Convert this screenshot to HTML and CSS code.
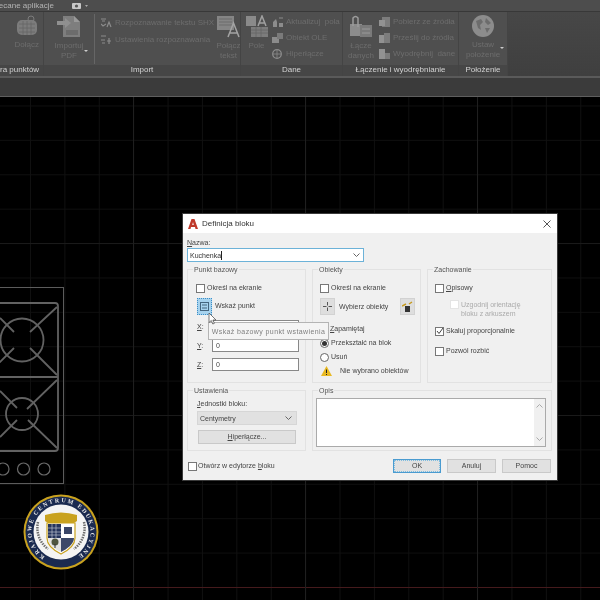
FILE: index.html
```html
<!DOCTYPE html>
<html lang="pl">
<head>
<meta charset="utf-8">
<title>Definicja bloku</title>
<link rel="stylesheet" href="styles.css">
</head>
<body>
<div class="app">
  <header class="top">
    <div class="tabs">
      <span class="tab-text">lecane aplikacje</span>
      <svg class="cam" width="20" height="8" viewBox="0 0 20 8"><rect x="0" y="1" width="9" height="6" rx="1" fill="#c8c8c8"/><circle cx="4.500" cy="4" r="1.600" fill="#555"/><path d="M13 3h3l-1.500 2z" fill="#aaa"/></svg>
    </div>
    <div class="ribbon">
      <section class="panel p1">
        <div class="pbody end">
          <div class="big"><svg width="22" height="22" viewBox="0 0 22 22"><rect x="1" y="5" width="20" height="15" rx="5" fill="#7c7c7c"/><path d="M3 9h16M3 13h16M3 17h16M7 6v14M11 6v14M15 6v14" stroke="#666" stroke-width=".8"/><circle cx="15" cy="4" r="3" fill="none" stroke="#7c7c7c"/></svg><span>Dołącz</span></div>
        </div>
        <div class="ptitle left">ra punktów</div>
      </section>
      <section class="panel p2">
        <div class="pbody">
          <div class="big w-import"><svg width="24" height="23" viewBox="0 0 24 23"><path d="M6 1h11l6 6v15H6z" fill="#7e7e7e"/><path d="M0 6h8V3l6 5-6 5v-3H0z" fill="#909090"/><path d="M17 1v6h6" fill="#999"/><rect x="9" y="15" width="12" height="5" fill="#6c6c6c"/></svg><span>Importuj<br>PDF</span></div>
          <i class="caret c-pdf"></i>
          <div class="vsep"></div>
          <div class="rows w-rec">
            <div class="row"><svg width="11" height="10" viewBox="0 0 11 10"><path d="M0 1h5M1 3h3M6 9l2-5 2 5M0 6l2 2 3-2" fill="none" stroke="#8c8c8c" stroke-width="1.200"/></svg><span>Rozpoznawanie tekstu SHX</span></div>
            <div class="row"><svg width="11" height="10" viewBox="0 0 11 10"><path d="M0 1h5M0 5h4M6 6h4M8 3v6M1 8h3" fill="none" stroke="#8c8c8c" stroke-width="1.200"/></svg><span>Ustawienia rozpoznawania</span></div>
          </div>
          <div class="big w-join"><svg width="23" height="23" viewBox="0 0 23 23"><rect x="0" y="1" width="17" height="14" fill="#858585"/><path d="M2 4h13M2 7h13M2 10h13" stroke="#666" stroke-width=".8"/><path d="M11 22l5.500-14 5.500 14M13 18h7" fill="none" stroke="#a4a4a4" stroke-width="1.500"/></svg><span>Połącz<br>tekst</span></div>
        </div>
        <div class="ptitle">Import</div>
      </section>
      <section class="panel p3">
        <div class="pbody">
          <div class="big w-pole"><svg width="22" height="23" viewBox="0 0 22 23"><rect x="0" y="1" width="10" height="10" fill="#8a8a8a"/><path d="M12 11l4-10 4 10M13.500 8h5" fill="none" stroke="#a0a0a0" stroke-width="1.500"/><rect x="5" y="12" width="17" height="10" fill="#7c7c7c"/><path d="M5 15h17M5 18h17M10 12v10M15 12v10" stroke="#666" stroke-width=".8"/></svg><span>Pole</span></div>
          <div class="rows w-dane">
            <div class="row"><svg width="11" height="10" viewBox="0 0 11 10"><path d="M1 10V5l3-3 1 3v5zM7 6h4v4H7z" fill="#8c8c8c"/><path d="M7 1h4" stroke="#8c8c8c"/></svg><span>Aktualizuj&nbsp; pola</span></div>
            <div class="row"><svg width="11" height="10" viewBox="0 0 11 10"><rect x="0" y="4" width="7" height="6" fill="#8c8c8c"/><rect x="5" y="0" width="6" height="6" fill="#7a7a7a"/></svg><span>Obiekt OLE</span></div>
            <div class="row"><svg width="11" height="10" viewBox="0 0 11 10"><circle cx="5" cy="5" r="4.300" fill="none" stroke="#8c8c8c" stroke-width="1.300"/><path d="M1 5h8M5 1v8" stroke="#8c8c8c" stroke-width=".8"/></svg><span>Hiperłącze</span></div>
          </div>
        </div>
        <div class="ptitle">Dane</div>
      </section>
      <section class="panel p4">
        <div class="pbody">
          <div class="big w-lacze"><svg width="22" height="23" viewBox="0 0 22 23"><rect x="0" y="9" width="12" height="12" fill="#8c8c8c"/><path d="M3 11V3q2.500-3 5 0v9" fill="none" stroke="#9c9c9c" stroke-width="1.500"/><rect x="10" y="10" width="12" height="12" fill="#7a7a7a"/><path d="M12 14h8M12 18h8" stroke="#999"/></svg><span>Łącze<br>danych</span></div>
          <div class="rows w-zrodlo">
            <div class="row"><svg width="11" height="10" viewBox="0 0 11 10"><rect x="3" y="0" width="8" height="10" fill="#7c7c7c"/><rect x="0" y="3" width="6" height="6" fill="#929292"/></svg><span>Pobierz ze źródła</span></div>
            <div class="row"><svg width="11" height="10" viewBox="0 0 11 10"><rect x="0" y="2" width="5" height="8" fill="#929292"/><rect x="5" y="0" width="6" height="10" fill="#7c7c7c"/></svg><span>Prześlij do źródła</span></div>
            <div class="row"><svg width="11" height="10" viewBox="0 0 11 10"><rect x="0" y="0" width="6" height="10" fill="#929292"/><rect x="6" y="4" width="5" height="6" fill="#7c7c7c"/></svg><span>Wyodrębnij&nbsp; dane</span></div>
          </div>
        </div>
        <div class="ptitle">Łączenie i wyodrębnianie</div>
      </section>
      <section class="panel p5">
        <div class="pbody center">
          <div class="big"><svg width="22" height="22" viewBox="0 0 22 22"><circle cx="11" cy="11" r="11" fill="#8c8c8c"/><path d="M4 6l5-2 2 3-3 3 1 5-3-2zM14 3l5 5-3 2-3-3zM13 13l5 0-3 5z" fill="#6c6c6c"/></svg><span>Ustaw<br>położenie</span></div>
          <i class="caret"></i>
        </div>
        <div class="ptitle">Położenie</div>
      </section>
      <div class="ribbon-rest"></div>
    </div>
    <div class="subbar"></div>
  </header>

  <main class="canvas">
    <svg class="stove" width="70" height="200" viewBox="0 287 70 200">
      <rect x="-30" y="287.500" width="93.500" height="196" fill="none" stroke="#5c5c5c" stroke-width="1"/>
      <g fill="none" stroke="#626262" stroke-width="1.800">
        <rect x="-30" y="303" width="88" height="148" rx="3"/>
        <path d="M-30 377H58"/>
        <circle cx="22" cy="340" r="21.500"/>
        <circle cx="22" cy="414" r="16"/>
        <path d="M57 307L30 332M30 348L57 375M14 332L0 318M14 348L-2 364M57 380L27 409M28 420L57 448M17 408L0 391M17 420L0 437"/>
      </g>
      <g fill="none" stroke="#6a6a6a" stroke-width="1.200">
        <circle cx="3" cy="469" r="6"/>
        <circle cx="23.500" cy="469" r="6"/>
        <circle cx="44" cy="469" r="6"/>
      </g>
    </svg>

    <svg class="logo" width="76" height="76" viewBox="0 0 76 76">
      <circle cx="38" cy="38" r="37.500" fill="#c9a21f"/>
      <circle cx="38" cy="38" r="35.500" fill="#1a2a50"/>
      <circle cx="38" cy="38" r="27.500" fill="#f4f4f4"/>
      <path id="arc" d="M28 65.500A29.500 29.500 0 1 1 48 65.500" fill="none"/>
      <text class="logo-text"><textPath href="#arc" startOffset="50%" text-anchor="middle">KRAJOWE CENTRUM EDUKACYJNE</textPath></text>
      <path d="M15 28c-2 10 1 20 10 27M61 28c2 10-1 20-10 27" fill="none" stroke="#6d6d6d" stroke-width="2.500" stroke-dasharray="1.500 1"/>
      <path d="M22 21q16-5 32 0v6l-3 2H25l-3-2z" fill="#c9a21f"/>
      <path d="M24 29h28v15c0 8-8 13-14 16-6-3-14-8-14-16z" fill="#fff" stroke="#c9a21f" stroke-width="1.200"/>
      <path d="M25 30h13v14H25z" fill="#25345c"/>
      <path d="M25 34h13M25 38h13M25 41h13M29 30v14M33 30v14" stroke="#cfd3dc" stroke-width=".6"/>
      <path d="M38 44h13c0 6-7 11-13 14z" fill="#3c4868"/>
      <path d="M25 44h13v14c-5-2-13-7-13-14z" fill="#e2e2e2"/>
      <rect x="41" y="33" width="8" height="7" fill="#3a4668"/>
      <circle cx="32" cy="48" r="3.500" fill="#4f5540"/>
      <rect x="31.500" y="50" width="1" height="4" fill="#333"/>
    </svg>

    <div class="dialog">
      <div class="titlebar">
        <svg class="acad" width="10" height="10" viewBox="0 0 10 10"><path d="M3.500 0h3L10 10H7.500L7 8H3l-.5 2H0z" fill="#c0392b"/><path d="M4 6h2L5 3z" fill="#f4d0cc"/></svg>
        <span class="dtitle">Definicja bloku</span>
        <svg class="close" width="8" height="8" viewBox="0 0 8 8"><path d="M.5.5l7 7M7.500.5l-7 7" stroke="#555" stroke-width="1"/></svg>
      </div>
      <div class="dbody">
        <label class="lbl-name"><u>N</u>azwa:</label>
        <div class="name-input"><span class="name-text">Kuchenka</span><i class="text-cursor"></i><svg class="chev" width="7" height="4" viewBox="0 0 7 4"><path d="M.5.500l3 3 3-3" fill="none" stroke="#666"/></svg></div>

        <div class="groups">
          <div class="group g-base">
            <span class="legend">Punkt bazowy</span>
            <div class="chk-row"><i class="chk"></i><span>Określ na ekranie</span></div>
            <div class="pick-row">
              <div class="pick"><svg width="9" height="9" viewBox="0 0 9 9"><rect x=".5" y=".5" width="8" height="8" fill="none" stroke="#45667f"/><path d="M2 3h5M2 6h5" stroke="#45667f"/></svg></div>
              <span>Wskaż punkt</span>
            </div>
            <div class="coord c-x"><span class="clabel"><u>X</u>:</span><div class="field"></div></div>
            <div class="coord"><span class="clabel"><u>Y</u>:</span><div class="field">0</div></div>
            <div class="coord"><span class="clabel"><u>Z</u>:</span><div class="field">0</div></div>
          </div>

          <div class="group g-obj">
            <span class="legend">Obiekty</span>
            <div class="chk-row"><i class="chk"></i><span>Określ na ekranie</span></div>
            <div class="obj-row">
              <div class="sq"><svg width="9" height="9" viewBox="0 0 9 9"><path d="M4.500 0v3.500M4.500 5.500V9M0 4.500h3.500M5.500 4.500H9" stroke="#555"/></svg></div>
              <span class="obj-text">Wybierz obiekty</span>
              <div class="sq sq2"><svg width="11" height="11" viewBox="0 0 11 11"><rect x="3" y="5" width="5" height="6" fill="#333"/><path d="M0 5l4-2M7 3l3-2" stroke="#c79a1d" stroke-width="1.500"/></svg></div>
            </div>
            <div class="remember"><u>Z</u>apamiętaj</div>
            <div class="radio-row"><i class="radio on"></i><span>Przekształć na blok</span></div>
            <div class="radio-row r2"><i class="radio"></i><span>Usuń</span></div>
            <div class="warn-row">
              <svg width="11" height="10" viewBox="0 0 11 10"><path d="M5.500 0L11 10H0z" fill="#e8b923"/><path d="M5.500 3.500v3.500M5.500 8v1" stroke="#222"/></svg>
              <span>Nie wybrano obiektów</span>
            </div>
          </div>

          <div class="group g-beh">
            <span class="legend">Zachowanie</span>
            <div class="chk-row"><i class="chk"></i><span><u>O</u>pisowy</span></div>
            <div class="chk-row sub"><i class="chk dis"></i><span>Uzgodnij orientację<br>bloku z arkuszem</span></div>
            <div class="chk-row scale"><i class="chk"><svg width="8" height="8" viewBox="0 0 8 8"><path d="M1 4l2 2.500L7 1" fill="none" stroke="#444"/></svg></i><span>Skaluj proporcjonalnie</span></div>
            <div class="chk-row allow"><i class="chk"></i><span>Pozwól rozbić</span></div>
          </div>

          <div class="group g-set">
            <span class="legend">Ustawienia</span>
            <div class="unit-label"><u>J</u>ednostki bloku:</div>
            <div class="select"><span>Centymetry</span><svg width="7" height="4" viewBox="0 0 7 4"><path d="M.5.500l3 3 3-3" fill="none" stroke="#666"/></svg></div>
            <div class="btn hyper"><span><u>H</u>iperłącze...</span></div>
          </div>

          <div class="group g-desc">
            <span class="legend">Opis</span>
            <div class="textarea">
              <div class="scroll">
                <svg width="7" height="4" viewBox="0 0 7 4"><path d="M.5 3.500l3-3 3 3" fill="none" stroke="#aaa"/></svg>
                <svg width="7" height="4" viewBox="0 0 7 4"><path d="M.5.500l3 3 3-3" fill="none" stroke="#aaa"/></svg>
              </div>
            </div>
          </div>
        </div>

        <div class="footer">
          <div class="chk-row open"><i class="chk"></i><span>Otwórz w edytorze <u>b</u>loku</span></div>
          <div class="buttons">
            <div class="btn ok">OK</div>
            <div class="btn">Anuluj</div>
            <div class="btn">Pomoc</div>
          </div>
        </div>
      </div>

      <div class="tooltip">Wskaż bazowy punkt wstawienia</div>
      <svg class="pointer" width="9" height="13" viewBox="0 0 9 13"><path d="M1 1v9.500l2.300-2 1.500 3.500 1.600-.7-1.500-3.300H8z" fill="#fff" stroke="#555" stroke-width=".8"/></svg>
    </div>
  </main>
</div>
</body>
</html>
```

FILE: styles.css
```css
* { box-sizing: border-box; }
html, body { margin: 0; padding: 0; background: #000; }
body { width: 600px; height: 600px; overflow: hidden; font-family: "Liberation Sans", Arial, sans-serif; }
.app { width: 600px; height: 600px; display: flex; flex-direction: column; }
svg { flex: none; display: block; }

/* top */
.top { height: 97px; flex: none; background: #3b3b3b; }
.tabs { height: 12px; background: #4d4d4d; border-bottom: 1px solid #383838; display: flex; align-items: center; font-size: 8px; color: #b4b4b4; filter: blur(.4px); }
.tab-text { width: 75px; margin-left: -3px; padding-bottom: 1px; flex: none; }
.ribbon { height: 64px; display: flex; background: #444; filter: blur(.5px); }
.panel { display: flex; flex-direction: column; background: #4f4f4f; border-right: 1px solid #444; flex: none; overflow: hidden; }
.p1 { width: 44px; }
.p2 { width: 197px; }
.p3 { width: 102px; }
.p4 { width: 116px; }
.p5 { width: 49px; }
.ribbon-rest { flex: 1; background: linear-gradient(#474747, #3f3f3f); }
.pbody { flex: 1; display: flex; padding-top: 3px; color: #6d6d6d; font-size: 8px; position: relative; min-height: 0; }
.pbody.end { justify-content: flex-end; padding-right: 4px; }
.pbody.center { justify-content: center; }
.ptitle { height: 11px; flex: none; background: #464646; color: #d2d2d2; font-size: 8px; line-height: 10px; text-align: center; white-space: nowrap; }
.ptitle.left { text-align: right; padding-right: 4px; }
.big { display: flex; flex-direction: column; align-items: center; line-height: 10px; text-align: center; white-space: nowrap; }
.big span { margin-top: 3px; }
.vsep { width: 1px; height: 50px; background: #666; margin-top: -1px; flex: none; }
.rows { display: flex; flex-direction: column; white-space: nowrap; }
.row { display: flex; align-items: center; height: 10px; gap: 3px; line-height: 10px; }
.w-import { width: 50px; flex: none; }
.w-rec { width: 121px; flex: none; padding-left: 6px; padding-top: 3px; gap: 7px; }
.w-join { width: 25px; flex: none; }
.w-pole { width: 25px; margin-left: 3px; flex: none; }
.w-dane { padding-left: 3px; gap: 6px; padding-top: 2px; }
.w-lacze { width: 26px; margin-left: 5px; flex: none; }
.w-zrodlo { padding-left: 5px; gap: 6px; padding-top: 2px; }
.caret { position: absolute; right: 3px; top: 35px; width: 0; height: 0; border: 2px solid transparent; border-top: 2px solid #ccc; }
.caret.c-pdf { right: auto; left: 40px; top: 38px; }
.subbar { height: 21px; background: #3b3b3b; border-top: 2px solid #5a5a5a; border-bottom: 1px solid #5f5f5f; filter: blur(.3px); }

/* model space */
.canvas {
  flex: 1; position: relative; overflow: hidden; background-color: #000;
  background-image:
    linear-gradient(90deg, #1f1f1f 1px, transparent 1px),
    linear-gradient(#451a1c 1px, transparent 1px),
    linear-gradient(#1a1a1a 1px, transparent 1px),
    linear-gradient(90deg, #101010 1px, transparent 1px),
    linear-gradient(#0f0f0f 1px, transparent 1px);
  background-size: 172px 100%, 100% 100%, 100% 172px, 34.4px 100%, 100% 34.4px;
  background-position: 133px 0, 0 490px, 0 146px, 30px 0, 0 8.500px;
  background-repeat: repeat, no-repeat, repeat, repeat, repeat;
}
.stove { position: absolute; left: 0; top: 190px; filter: blur(.4px); }
.logo { position: absolute; left: 23px; top: 397px; filter: blur(.3px); }
.logo-text { font-family: "Liberation Serif", serif; font-size: 6px; font-weight: 700; fill: #e8e8e8; letter-spacing: 1.700px; }

/* dialog */
.dialog { position: absolute; left: 182px; top: 116px; width: 376px; height: 268px; background: #f0f0f0; border: 1px solid #3a3a3a; font-size: 7px; color: #444; filter: blur(.35px); display: flex; flex-direction: column; }
.titlebar { height: 19px; flex: none; background: #fff; display: flex; align-items: center; padding: 0 6px 0 5px; }
.dtitle { margin-left: 4px; font-size: 8px; color: #333; flex: 1; }
.dbody { flex: 1; padding: 4px 6px 0 4px; display: flex; flex-direction: column; }
.lbl-name { display: block; line-height: 11px; height: 11px; }
.name-input { width: 177px; height: 14px; border: 1px solid #6cb2d8; background: #fff; display: flex; align-items: center; padding: 0 3px 0 2px; color: #333; margin-bottom: 7px; }
.text-cursor { width: 1px; height: 9px; background: #222; }
.chev { margin-left: auto; }
.groups { display: grid; grid-template-columns: 119px 109px 125px; grid-template-rows: 114px 61px; column-gap: 6px; row-gap: 7px; }
.group { position: relative; border: 1px solid #e2e2e2; display: flex; flex-direction: column; }
.legend { position: absolute; top: -5px; left: 5px; line-height: 10px; background: #f0f0f0; padding: 0 1px; color: #555; white-space: nowrap; }
.g-desc { grid-column: 2 / 4; padding: 7px 5px 3px 3px; }
.chk-row { display: flex; align-items: center; gap: 2px; white-space: nowrap; line-height: 10px; }
.chk { width: 9px; height: 9px; flex: none; border: 1px solid #777; background: #fff; display: flex; align-items: center; justify-content: center; }
.chk.dis { border-color: #e4e4e4; }
.g-base { padding: 13px 0 0 8px; }
.pick-row { display: flex; gap: 3px; margin-top: 5px; margin-left: 1px; height: 17px; }
.pick { width: 15px; height: 17px; background: #a7d3ee; border: 1px dotted #3d8ec6; display: flex; align-items: center; justify-content: center; flex: none; }
.pick-row span { margin-top: 3px; line-height: 10px; }
.coord { display: flex; align-items: center; height: 13px; margin-top: 6px; }
.c-x { margin-top: 5px; }
.clabel { width: 16px; padding-left: 1px; flex: none; }
.field { width: 87px; height: 13px; border: 1px solid #888; background: #fff; padding-left: 3px; line-height: 11px; }
.g-obj { padding: 13px 0 0 7px; }
.obj-row { display: flex; align-items: center; height: 17px; margin-top: 5px; }
.sq { width: 15px; height: 17px; background: #dedede; border: 1px solid #d2d2d2; display: flex; align-items: center; justify-content: center; flex: none; }
.obj-text { margin-left: 4px; width: 61px; white-space: nowrap; flex: none; }
.remember { margin-top: 9px; margin-left: 10px; line-height: 10px; }
.radio-row { display: flex; align-items: center; gap: 2px; margin-top: 4px; line-height: 10px; white-space: nowrap; }
.radio { width: 9px; height: 9px; border-radius: 50%; border: 1px solid #666; background: #fff; flex: none; display: flex; align-items: center; justify-content: center; }
.radio.on::after { content: ""; width: 5px; height: 5px; border-radius: 50%; background: #333; }
.warn-row { display: flex; align-items: center; gap: 8px; margin-top: 4px; margin-left: 1px; line-height: 10px; white-space: nowrap; }
.g-beh { padding: 13px 0 0 7px; }
.sub { margin-top: 7px; margin-left: 15px; color: #aaa; align-items: flex-start; line-height: 9px; }
.scale { margin-top: 8px; }
.allow { margin-top: 10px; }
.g-set { padding: 8px 0 0 9px; }
.unit-label { line-height: 10px; }
.select { width: 100px; height: 14px; margin-top: 2px; background: #e1e1e1; border: 1px solid #d6d6d6; display: flex; align-items: center; justify-content: space-between; padding: 0 4px 0 2px; }
.btn { height: 14px; background: #e1e1e1; border: 1px solid #c9c9c9; display: flex; align-items: center; justify-content: center; line-height: 10px; }
.hyper { width: 98px; margin: 5px 0 0 1px; }
.textarea { flex: 1; background: #fff; border: 1px solid #aaa; display: flex; justify-content: flex-end; }
.scroll { width: 11px; background: #f0f0f0; display: flex; flex-direction: column; align-items: center; justify-content: space-between; padding: 5px 0; }
.footer { display: flex; justify-content: space-between; align-items: center; margin-top: 7px; height: 16px; }
.open { margin-left: 1px; gap: 1px; }
.buttons { display: flex; gap: 6px; }
.buttons .btn { width: 49px; }
.btn.ok { width: 48px; border: 1px solid #4a9bd0; outline: 1px dotted #7fbde0; outline-offset: -2px; }

.tooltip { position: absolute; left: 25px; top: 108px; width: 121px; height: 18px; background: #f4f4f4; border: 1px solid #b4b4b4; color: #808080; display: flex; align-items: center; justify-content: center; white-space: nowrap; letter-spacing: .4px; }
.pointer { position: absolute; left: 25px; top: 98px; }
```
